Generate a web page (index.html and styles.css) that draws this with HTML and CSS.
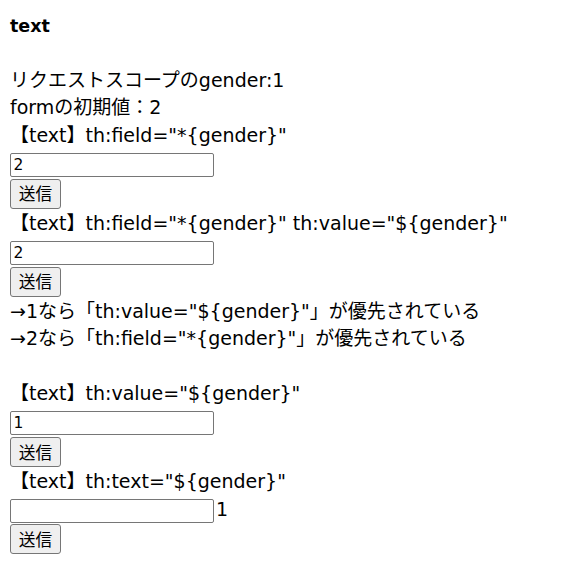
FILE: index.html
```html
<!DOCTYPE html>
<html lang="ja">
<head>
<meta charset="utf-8">
<title>text</title>
<link rel="stylesheet" href="styles.css">
</head>
<body>
<div class="page">
  <div class="title">text</div>
  <p class="line">リクエストスコープのgender:1</p>
  <p class="line">formの初期値：2</p>
  <form class="entry">
    <p class="line">【text】th:field="*{gender}"</p>
    <input class="field" type="text" value="2">
    <button class="send" type="button">送信</button>
  </form>
  <form class="entry">
    <p class="line">【text】th:field="*{gender}" th:value="${gender}"</p>
    <input class="field" type="text" value="2">
    <button class="send" type="button">送信</button>
  </form>
  <p class="line">→1なら「th:value="${gender}"」が優先されている</p>
  <p class="line gap-after">→2なら「th:field="*{gender}"」が優先されている</p>
  <form class="entry">
    <p class="line">【text】th:value="${gender}"</p>
    <input class="field" type="text" value="1">
    <button class="send" type="button">送信</button>
  </form>
  <form class="entry">
    <p class="line">【text】th:text="${gender}"</p>
    <div class="field-row">
      <input class="field" type="text" value="">
      <span class="after">1</span>
    </div>
    <button class="send last" type="button">送信</button>
  </form>
</div>
</body>
</html>
```
FILE: styles.css
```css
html, body {
  margin: 0;
  padding: 0;
  background: #ffffff;
}

body {
  font-family: "DejaVu Sans", "Noto Sans CJK JP", sans-serif;
  font-size: 19px;
  color: #000000;
}

.page {
  padding: 10px 10px 0 10px;
}

.title {
  font-size: 17.5px;
  font-weight: bold;
  height: 27.5px;
  line-height: 33.5px;
  margin-bottom: 28px;
}

.line {
  margin: 0;
  height: 27.5px;
  line-height: 29.5px;
  white-space: nowrap;
}

.gap-after {
  margin-bottom: 27.5px;
}

.entry {
  margin: 0;
}

.field {
  display: block;
  box-sizing: border-box;
  width: 204px;
  height: 24px;
  margin: 4.5px 0 0 0;
  padding: 0 2.5px;
  border: 1px solid #767676;
  border-radius: 2px;
  background: #ffffff;
  font-family: "DejaVu Sans", "Noto Sans CJK JP", sans-serif;
  font-size: 15.5px;
  color: #000000;
}

.field-row {
  display: flex;
  align-items: baseline;
  margin-top: 4.5px;
}

.field-row .field {
  margin-top: 0;
}

.after {
  font-size: 19px;
  line-height: 18px;
  margin-left: 2px;
}

.send {
  display: block;
  box-sizing: border-box;
  width: 51px;
  height: 30px;
  margin: 2px 0 0 0;
  padding: 0;
  border: 1px solid #767676;
  border-radius: 3px;
  background: #efefef;
  font-family: "Noto Sans CJK JP", sans-serif;
  font-size: 16.7px;
  line-height: 1;
  color: #000000;
}

.send.last {
  margin-top: 1px;
}
```
